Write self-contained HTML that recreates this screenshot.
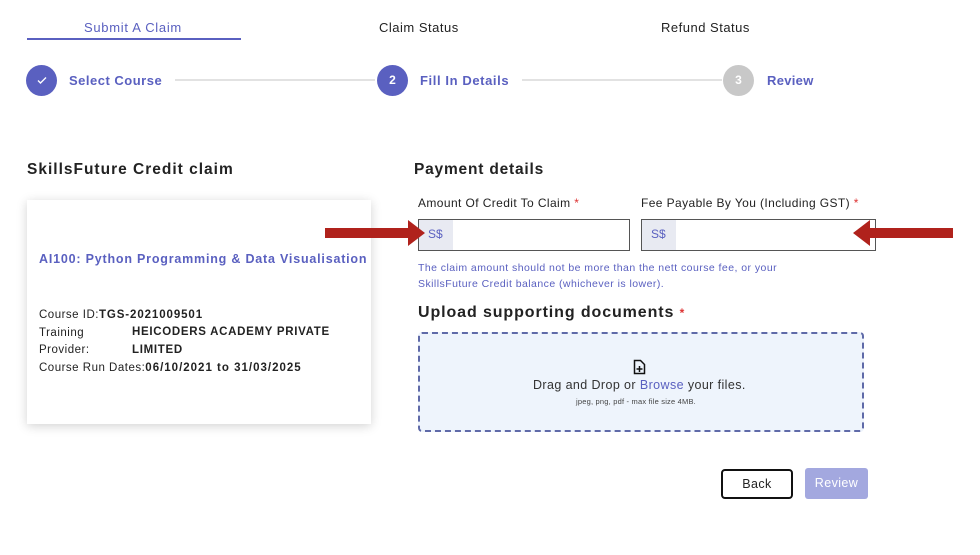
<!DOCTYPE html>
<html><head><meta charset="utf-8"><style>
*{margin:0;padding:0;box-sizing:border-box}
body{width:980px;height:555px;background:#fff;font-family:"Liberation Sans",sans-serif;position:relative;overflow:hidden;color:#222}
.a{position:absolute;white-space:nowrap}
.p{color:#5a60c0}
.b{font-weight:bold}
.circ{position:absolute;width:31px;height:31px;border-radius:50%;color:#fff;font-size:12px;font-weight:bold;text-align:center;line-height:31px}
.line{position:absolute;height:2px;background:#e2e2e2;top:79px}
.inp{position:absolute;height:32px;border:1.5px solid #555;background:#fff}
.inp span{position:absolute;left:0;top:0;bottom:0;width:34px;background:#e8eaf2;color:#5a60c0;font-size:12px;line-height:29px;padding-left:9px}
</style></head><body>
<div class="a p" style="left:84px;top:20px;font-size:13px;letter-spacing:.7px">Submit A Claim</div>
<div style="position:absolute;left:27px;top:38px;width:214px;height:2px;background:#5a60c0"></div>
<div class="a" style="left:379px;top:20px;font-size:13px;letter-spacing:.5px">Claim Status</div>
<div class="a" style="left:661px;top:20px;font-size:13px;letter-spacing:.5px">Refund Status</div>

<div class="circ" style="left:26px;top:65px;background:#5a60c0"><svg width="14" height="14" viewBox="0 0 14 14" style="margin-top:8px"><path d="M3 7.5l2.5 2.5L11 4.5" stroke="#fff" stroke-width="1.4" fill="none"/></svg></div>
<div class="a p b" style="left:69px;top:73px;font-size:13px;letter-spacing:.5px">Select Course</div>
<div class="line" style="left:175px;width:200px"></div>
<div class="circ" style="left:377px;top:65px;background:#5a60c0">2</div>
<div class="a p b" style="left:420px;top:73px;font-size:13px;letter-spacing:.6px">Fill In Details</div>
<div class="line" style="left:522px;width:200px"></div>
<div class="circ" style="left:723px;top:65px;background:#c8c8c8">3</div>
<div class="a p b" style="left:767px;top:73px;font-size:13px;letter-spacing:.3px">Review</div>

<div class="a b" style="left:27px;top:161px;font-size:15.5px;letter-spacing:1px">SkillsFuture Credit claim</div>
<div style="position:absolute;left:27px;top:200px;width:344px;height:224px;background:#fff;box-shadow:0 2px 10px rgba(0,0,0,.18)"></div>
<div class="a p b" style="left:39px;top:252px;font-size:12.5px;letter-spacing:.8px">AI100: Python Programming &amp; Data Visualisation</div>
<div class="a" style="left:39px;top:307px;font-size:11.5px;line-height:17.5px;letter-spacing:.5px">Course ID:<b style="letter-spacing:.9px">TGS-2021009501</b><br>Training<br>Provider:<br>Course Run Dates:<b style="letter-spacing:1px">06/10/2021 to 31/03/2025</b></div>
<div class="a b" style="left:132px;top:324px;font-size:11.5px;line-height:17.5px;letter-spacing:.7px">HEICODERS ACADEMY PRIVATE<br>LIMITED</div>

<div class="a b" style="left:414px;top:161px;font-size:15.5px;letter-spacing:.8px">Payment details</div>
<div class="a" style="left:418px;top:196px;font-size:12px;letter-spacing:.4px">Amount Of Credit To Claim <span style="color:#d33">*</span></div>
<div class="a" style="left:641px;top:196px;font-size:12px;letter-spacing:.4px">Fee Payable By You (Including GST) <span style="color:#d33">*</span></div>
<div class="inp" style="left:418px;top:219px;width:212px"><span>S$</span></div>
<div class="inp" style="left:641px;top:219px;width:235px"><span>S$</span></div>
<div class="a p" style="left:418px;top:261px;font-size:10.5px;line-height:15.5px;letter-spacing:.45px">The claim amount should not be more than the nett course fee, or your<br>SkillsFuture Credit balance (whichever is lower).</div>

<svg style="position:absolute;left:0;top:0" width="980" height="555">
<path d="M325 228h83v-8l17 13-17 13v-8h-83z" fill="#b0221c"/>
<path d="M953 228h-83v-8l-17 13 17 13v-8h83z" fill="#b0221c"/>
</svg>

<div class="a b" style="left:418px;top:304px;font-size:16px;letter-spacing:.9px">Upload supporting documents <span style="color:#d33;font-size:12px">*</span></div>
<div style="position:absolute;left:418px;top:332px;width:446px;height:100px;background:#eef4fc;border:2px dashed #5f6aa8;border-radius:4px"></div>
<svg style="position:absolute;left:633px;top:359px" width="13" height="16" viewBox="0 0 13 16"><path d="M1.5 1.5h6l4 4v9h-10z" fill="none" stroke="#111" stroke-width="1.5"/><path d="M6.5 7v6M3.5 10h6" stroke="#111" stroke-width="1.5"/></svg>
<div class="a" style="left:533px;top:378px;font-size:12.5px;color:#333;letter-spacing:.4px">Drag and Drop or <span class="p">Browse</span> your files.</div>
<div class="a" style="left:576px;top:397px;font-size:7.5px;color:#444;letter-spacing:.2px">jpeg, png, pdf - max file size 4MB.</div>

<div style="position:absolute;left:721px;top:469px;width:72px;height:30px;border:2px solid #111;border-radius:4px;text-align:center;line-height:26px;font-size:12.5px;letter-spacing:.4px">Back</div>
<div style="position:absolute;left:805px;top:468px;width:63px;height:31px;background:#a3a8df;border-radius:3px;text-align:center;line-height:31px;font-size:12.5px;color:#fff;letter-spacing:.4px">Review</div>
</body></html>
